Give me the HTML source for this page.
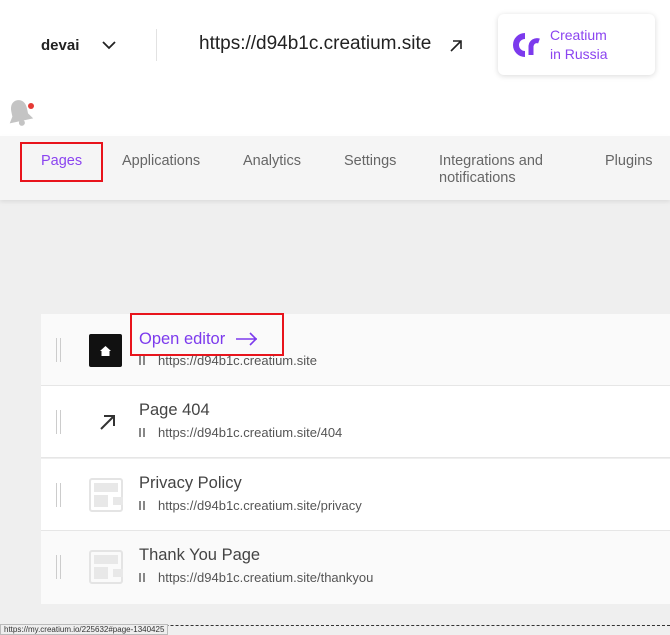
<!DOCTYPE html>
<html><head><meta charset="utf-8"><style>
*{margin:0;padding:0;box-sizing:border-box}
body{width:670px;height:635px;overflow:hidden;background:#efefef;font-family:"Liberation Sans",sans-serif;position:relative}
.top{position:absolute;left:0;top:0;width:670px;height:136px;background:#fff}
.a{position:absolute;white-space:nowrap}
.nav{position:absolute;left:0;top:136px;width:670px;height:64px;background:#f5f5f5;box-shadow:0 2px 4px rgba(0,0,0,.08)}
.nav .a{font-size:14.5px;color:#666}
.list{position:absolute;left:41px;top:314px;width:629px;height:290px}
.row{position:absolute;left:0;width:629px;height:72px;border-bottom:1px solid #e6e6e6}
.grip{position:absolute;left:15px;top:24px;width:5px;height:24px;border-left:1px solid #ccc;border-right:1px solid #ccc}
.t{position:absolute;left:98px;top:15px;font-size:16.5px;color:#444}
.u{position:absolute;left:117px;top:39px;font-size:13px;color:#555}
.p{position:absolute;left:98px;top:42px;width:6px;height:9px;border-left:2px solid #888;border-right:2px solid #888}
.ic{position:absolute;left:48px;top:19px;width:34px;height:34px;border:2px solid #e4e4e4;border-radius:3px}
.ic::before{content:"";position:absolute;left:3px;top:3px;width:24px;height:9px;background:#e8e8e8}
.ic::after{content:"";position:absolute;left:3px;top:15px;width:14px;height:12px;background:#e8e8e8;box-shadow:17px 0 0 -2px #e8e8e8}
</style></head><body>
<div class="top">
<div class="a" style="left:41px;top:37px;font-size:15px;font-weight:bold;color:#222">devai</div>
<svg class="a" style="left:101px;top:39px" width="16" height="12"><path d="M2 3l6 6 6-6" fill="none" stroke="#222" stroke-width="1.8"/></svg>
<div class="a" style="left:156px;top:29px;width:1px;height:32px;background:#e2e2e2"></div>
<div class="a" style="left:199px;top:33px;font-size:19px;color:#222">https://d94b1c.creatium.site</div>
<svg class="a" style="left:449px;top:39px" width="14" height="14"><path d="M2 12L12 2M4 2h8v8" fill="none" stroke="#222" stroke-width="1.6"/></svg>
<div class="a" style="left:498px;top:14px;width:157px;height:61px;background:#fff;border-radius:6px;box-shadow:0 1px 6px rgba(0,0,0,.15)"></div>
<svg class="a" style="left:512px;top:32px" width="30" height="26"><path d="M13 4a9 9 0 1 0 0 18" fill="none" stroke="#7c3aed" stroke-width="6"/><path d="M19 23V14a6 6 0 0 1 8-5" fill="none" stroke="#7c3aed" stroke-width="5"/></svg>
<div class="a" style="left:550px;top:26px;font-size:14px;line-height:19px;color:#8b44f0">Creatium<br>in Russia</div>
<svg class="a" style="left:4px;top:96px" width="32" height="32"><g transform="rotate(-12 16 18)"><path d="M16 4c-5 0-8 4-8 10v5l-4 6h24l-4-6v-5c0-6-3-10-8-10z" fill="#c4c4c4"/><circle cx="16" cy="27" r="3" fill="#c4c4c4"/></g><circle cx="27" cy="10" r="3" fill="#e53935"/></svg>
</div>
<div class="nav">
<div class="a" style="left:41px;top:17px;color:#8b44f0">Pages</div>
<div class="a" style="left:20px;top:6px;width:83px;height:40px;border:2px solid #e8141c"></div>
<div class="a" style="left:122px;top:17px">Applications</div>
<div class="a" style="left:243px;top:17px">Analytics</div>
<div class="a" style="left:344px;top:17px">Settings</div>
<div class="a" style="left:439px;top:17px;line-height:17px">Integrations and<br>notifications</div>
<div class="a" style="left:605px;top:17px">Plugins</div>
</div>
<div class="list">
<div class="row" style="top:0;background:#fafafa"><div class="grip"></div>
<div class="a" style="left:48px;top:20px;width:33px;height:33px;background:#111;border-radius:2px"><svg width="33" height="33"><path d="M11 17l5.5-5 5.5 5h-1.5v5h-8v-5z" fill="#fff"/></svg></div>
<div class="a" style="left:98px;top:16px;font-size:16.5px;color:#7c3aed">Open editor</div>
<svg class="a" style="left:194px;top:17px" width="24" height="16"><path d="M1 8h21M15 2l6 6-6 6" fill="none" stroke="#7c3aed" stroke-width="1.6"/></svg>
<div class="a" style="left:89px;top:-1px;width:154px;height:43px;border:2px solid #e8141c"></div>
<div class="p"></div><div class="u">https://d94b1c.creatium.site</div></div>
<div class="row" style="top:72px;background:#fff"><div class="grip"></div>
<svg class="a" style="left:58px;top:27px" width="18" height="18"><path d="M2 16L15 3M5 3h10v10" fill="none" stroke="#333" stroke-width="2"/></svg>
<div class="t">Page 404</div><div class="p"></div><div class="u">https://d94b1c.creatium.site/404</div></div>
<div class="row" style="top:145px;background:#fff"><div class="grip"></div><div class="ic"></div>
<div class="t">Privacy Policy</div><div class="p"></div><div class="u">https://d94b1c.creatium.site/privacy</div></div>
<div class="row" style="top:217px;background:#fafafa;border:0;height:73px"><div class="grip"></div><div class="ic"></div>
<div class="t">Thank You Page</div><div class="p"></div><div class="u">https://d94b1c.creatium.site/thankyou</div></div>
</div>
<div class="a" style="left:0;top:625px;width:670px;border-top:1px dashed #333"></div>
<div class="a" style="left:0;top:624px;height:11px;padding:0 3px;background:#eee;border:1px solid #bbb;font-size:8px;color:#333;line-height:9px">https://my.creatium.io/225632#page-1340425</div>
</body></html>
